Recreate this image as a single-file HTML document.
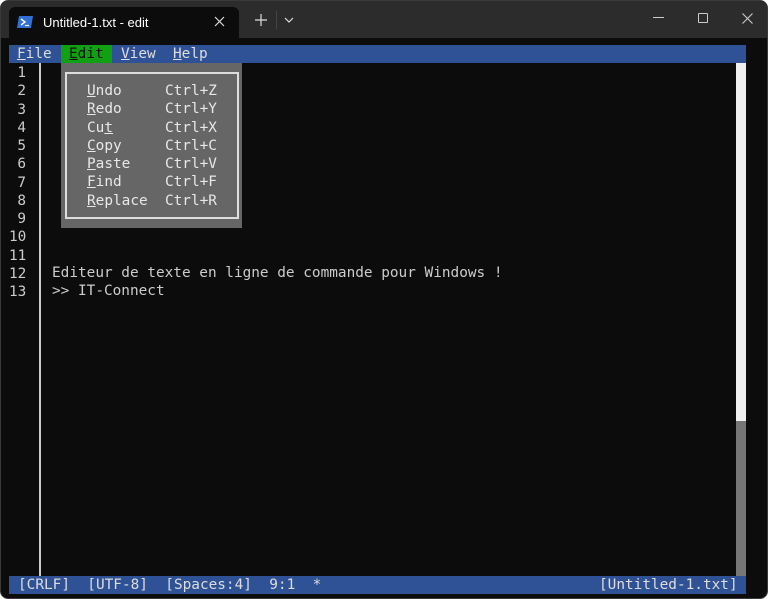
<!DOCTYPE html><html><head><style>
*{margin:0;padding:0;box-sizing:border-box}
body{width:768px;height:599px;background:#fff;overflow:hidden;font-family:"DejaVu Sans Mono","Liberation Mono",monospace;font-size:14.4px;color:#ccc}
#win{position:absolute;left:0;top:0;width:768px;height:599px;background:#0c0c0c;border-radius:8px;overflow:hidden;border:1px solid #3a3a3a}
#title{position:absolute;left:0;top:0;width:768px;height:37px;background:#2c2c2c}
#tab{position:absolute;left:8px;top:6px;width:230px;height:31px;background:#0c0c0c;border-radius:6px 6px 0 0}
.t{position:absolute;white-space:pre;line-height:18px}
.u{text-decoration:underline}
.menu{position:absolute;left:8px;top:44px;width:737px;height:18px;background:#2f5296}
.status{position:absolute;left:8px;top:575px;width:737px;height:18px;background:#2f5296}
</style></head><body><div id="win">
<div id="title"></div>
<div id="tab">
<svg style="position:absolute;left:8px;top:9px" width="16" height="12"><polygon points="2,0 16,0 14,12 0,12" fill="#2f6fd6"/><path d="M4,3 L8,6 L4,9" stroke="#fff" stroke-width="1.5" fill="none"/><path d="M8,9.5 H12" stroke="#fff" stroke-width="1.3"/></svg>
<div style="position:absolute;left:34px;top:8px;font:13px 'Liberation Sans',sans-serif;color:#fff">Untitled-1.txt - edit</div>
<svg style="position:absolute;left:205px;top:9px" width="11" height="11"><path d="M1,1L10,10M10,1L1,10" stroke="#ddd" stroke-width="1.2"/></svg>
</div>
<svg style="position:absolute;left:254px;top:13px" width="12" height="12"><path d="M6,0V12M0,6H12" stroke="#ddd" stroke-width="1.2"/></svg>
<div style="position:absolute;left:275px;top:10px;width:1px;height:18px;background:#444"></div>
<svg style="position:absolute;left:283px;top:16px" width="10" height="6"><path d="M1,1L5,5L9,1" stroke="#ddd" stroke-width="1.2" fill="none"/></svg>
<div style="position:absolute;left:652px;top:16px;width:11px;height:1px;background:#ccc"></div>
<div style="position:absolute;left:697px;top:12px;width:10px;height:10px;border:1px solid #ccc;border-radius:1px"></div>
<svg style="position:absolute;left:741px;top:12px" width="11" height="11"><path d="M0.5,0.5L10.5,10.5M10.5,0.5L0.5,10.5" stroke="#ccc" stroke-width="1.1"/></svg>

<div class="menu"></div>
<div style="position:absolute;left:60px;top:44px;width:51px;height:18px;background:#11a011"></div>
<div class="t" style="left:16px;top:44px;color:#ddd"><span class="u">F</span>ile  <span style="color:#111"><span class="u">E</span>dit</span>  <span class="u">V</span>iew  <span class="u">H</span>elp</div>

<div style="position:absolute;left:38px;top:62px;width:2px;height:513px;background:#ccc"></div>
<div class="t" style="left:8px;top:63px;line-height:18.25px;text-align:right;width:17px;color:#ccc">1
2
3
4
5
6
7
8
9
10
11
12
13</div>
<div class="t" style="left:51px;top:263px;line-height:18.25px;color:#ccc">Editeur de texte en ligne de commande pour Windows !
&gt;&gt; IT-Connect</div>

<div style="position:absolute;left:735px;top:62px;width:10px;height:358px;background:#f0f0f0"></div>
<div style="position:absolute;left:735px;top:420px;width:10px;height:155px;background:#777"></div>

<div style="position:absolute;left:60px;top:62px;width:181px;height:165px;background:#666"></div>
<div style="position:absolute;left:64px;top:71px;width:174px;height:147px;border:2px solid #ddd"></div>
<div class="t" style="left:86px;top:81px;line-height:18.25px;color:#e8e8e8"><span class="u">U</span>ndo     Ctrl+Z
<span class="u">R</span>edo     Ctrl+Y
Cu<span class="u">t</span>      Ctrl+X
<span class="u">C</span>opy     Ctrl+C
<span class="u">P</span>aste    Ctrl+V
<span class="u">F</span>ind     Ctrl+F
<span class="u">R</span>eplace  Ctrl+R</div>

<div class="status"></div>
<div class="t" style="left:17px;top:575px;color:#ddd">[CRLF]  [UTF-8]  [Spaces:4]  9:1  *</div>
<div class="t" style="left:598px;top:575px;color:#ddd">[Untitled-1.txt]</div>
</div></body></html>
